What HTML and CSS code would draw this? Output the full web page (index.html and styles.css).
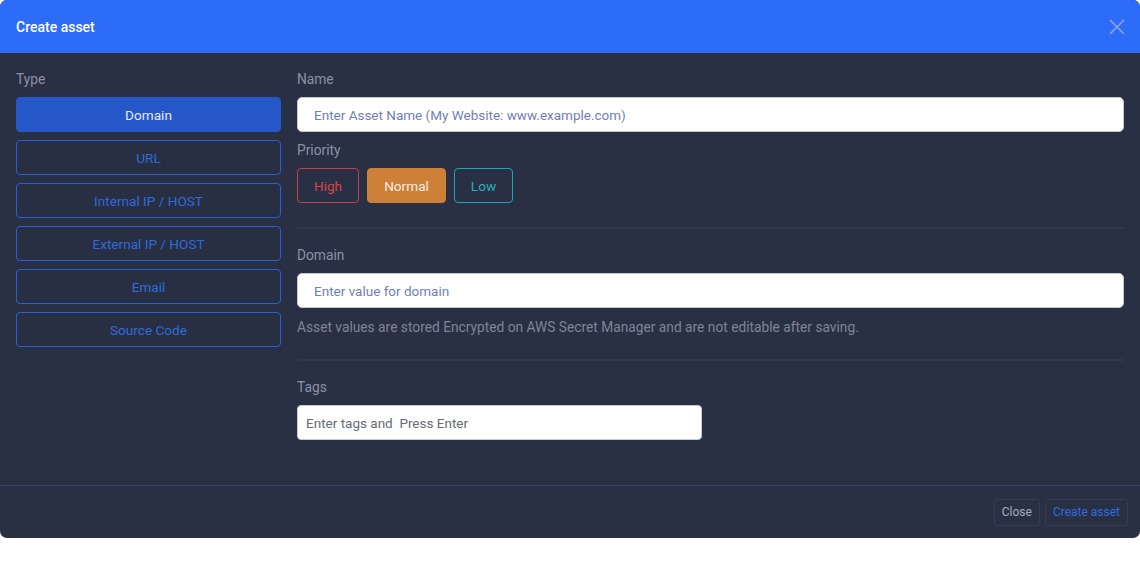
FILE: index.html
```html
<!DOCTYPE html>
<html>
<head>
<meta charset="utf-8">
<link rel="stylesheet" href="styles.css">
</head>
<body>
<div class="modal">
  <div class="modal-header">
    <div class="modal-title">Create asset</div>
    <button class="close-x" aria-label="Close">
      <svg width="18" height="18" viewBox="0 0 18 18"><path d="M2 2 L16 16 M16 2 L2 16" stroke="#8ea6e6" stroke-width="1.6" fill="none"/></svg>
    </button>
  </div>
  <div class="modal-body">
    <div class="type-col">
      <div class="label">Type</div>
      <div class="type-list">
        <button class="type-btn active">Domain</button>
        <button class="type-btn">URL</button>
        <button class="type-btn">Internal IP / HOST</button>
        <button class="type-btn">External IP / HOST</button>
        <button class="type-btn">Email</button>
        <button class="type-btn">Source Code</button>
      </div>
    </div>
    <div class="form-col">
      <div class="label">Name</div>
      <input class="text-input" type="text" placeholder="Enter Asset Name (My Website: www.example.com)">
      <div class="label label-priority">Priority</div>
      <div class="priority-row">
        <button class="prio high">High</button>
        <button class="prio normal">Normal</button>
        <button class="prio low">Low</button>
      </div>
      <hr class="divider first">
      <div class="label label-domain">Domain</div>
      <input class="text-input" type="text" placeholder="Enter value for domain">
      <div class="help">Asset values are stored Encrypted on AWS Secret Manager and are not editable after saving.</div>
      <hr class="divider second">
      <div class="label label-tags">Tags</div>
      <input class="tags-input" type="text" placeholder="Enter tags and  Press Enter">
    </div>
  </div>
  <div class="modal-footer">
    <button class="foot-btn">Close</button>
    <button class="foot-btn primary">Create asset</button>
  </div>
</div>
</body>
</html>
```
FILE: styles.css
```css
* { box-sizing: border-box; }
html, body { margin: 0; padding: 0; background: #ffffff; }
body { font-family: Roboto, "Noto Sans", sans-serif; width: 1140px; height: 578px; }

.modal {
  width: 1140px;
  height: 538px;
  background: #2a3043;
  border-radius: 7px;
  overflow: hidden;
  display: flex;
  flex-direction: column;
}
.modal-header {
  height: 53px;
  background: #2c6cf7;
  display: flex;
  align-items: center;
  justify-content: space-between;
  padding: 0 14px 0 16px;
}
.modal-title { color: #ffffff; font-size: 14px; font-weight: 500; }
.close-x { background: none; border: 0; padding: 0; display: flex; cursor: pointer; }

.modal-body {
  flex: 1;
  display: flex;
  gap: 16px;
  padding: 18px 16px 0 16px;
  border-bottom: 1px solid #3a4667;
}
.type-col { width: 265px; }
.form-col { flex: 1; display: flex; flex-direction: column; align-items: flex-start; }
.label { color: #8b92a4; font-size: 13.75px; line-height: 17px; margin-bottom: 9px; }
.type-list { display: flex; flex-direction: column; gap: 8px; }
.type-btn {
  height: 35px;
  width: 100%;
  border: 1px solid #2b5fd6;
  background: #292f42;
  color: #2e6bde;
  border-radius: 4px;
  font-family: Roboto, sans-serif;
  font-size: 13.6px;
}
.type-btn.active { background: #2557c8; border-color: #2557c8; color: #e4ebfa; }

.text-input {
  width: 100%;
  height: 35px;
  border: 1px solid #c4cad6;
  border-radius: 5px;
  background: #fff;
  padding: 0 16px;
  font-family: Roboto, sans-serif;
  font-size: 13.5px;
}
.text-input::placeholder { color: #6f7fb6; }
.label-priority { margin-top: 10px; }
.priority-row { display: flex; gap: 8px; }
.prio {
  height: 35px;
  border-radius: 4px;
  background: transparent;
  font-family: Roboto, sans-serif;
  font-size: 13.6px;
  border: 1px solid;
}
.prio.high { width: 62px; border-color: #c63f4e; color: #d9414f; }
.prio.normal { width: 79px; border-color: #cd8038; background: #cd8038; color: #f6ede3; }
.prio.low { width: 59px; border-color: #1fa7b6; color: #22afbd; }

.divider { width: 100%; border: 0; border-top: 2px solid #313848; margin: 24px 0 18px; }
.divider.second { margin: 23px 0 18px; }
.label-tags { margin-bottom: 9px; }
.help { color: #7d8596; font-size: 13.75px; margin-top: 11px; line-height: 17px; }

.tags-input {
  width: 405px;
  height: 35px;
  border: 1px solid #c4cad6;
  border-radius: 4px;
  background: #fff;
  padding: 0 8px;
  font-family: Roboto, sans-serif;
  font-size: 13.5px;
}
.tags-input::placeholder { color: #666b74; }

.modal-footer {
  height: 52px;
  display: flex;
  justify-content: flex-end;
  align-items: center;
  gap: 5px;
  padding: 0 12px;
}
.foot-btn {
  height: 27px;
  border: 1px solid #353c50;
  border-radius: 3px;
  background: #2a3043;
  color: #a6adbd;
  font-family: Roboto, sans-serif;
  font-size: 12px;
  padding: 0 7px;
}
.foot-btn.primary { color: #2f6ae0; }
```
